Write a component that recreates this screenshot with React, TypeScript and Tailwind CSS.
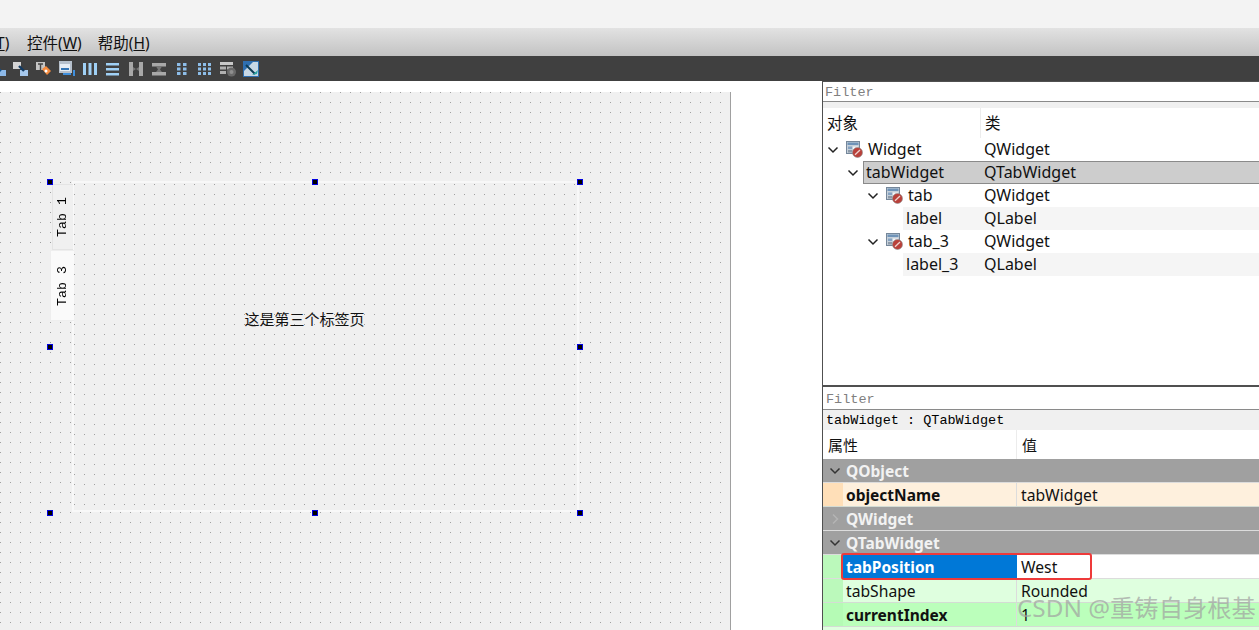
import React from 'react';

const MONO = 'font-["Liberation_Mono","Noto_Sans_CJK_SC",monospace]';

const Chevron = ({ open = true, light = false }: { open?: boolean; light?: boolean }) => (
  <svg width="12" height="12" viewBox="0 0 12 12" fill="none" className="shrink-0"
       stroke={light ? (open ? '#333' : '#b4b4b4') : '#222'} strokeWidth="1.5">
    {open ? <path d="M1.5 3.5 6 8l4.5-4.5" /> : <path d="M4 1.5 8.5 6 4 10.5" />}
  </svg>
);

const WidgetIcon = () => (
  <svg width="17" height="17" viewBox="0 0 17 17" className="shrink-0 blur-[0.3px]">
    <rect x="0.5" y="0.5" width="13" height="12" fill="#c6d0da" stroke="#75879a" />
    <rect x="1.5" y="1.5" width="11" height="2.5" fill="#6f93b8" />
    <rect x="2" y="5.5" width="4" height="2.5" fill="#86a3c2" />
    <rect x="7" y="5.5" width="5" height="2.5" fill="#f2f5f8" />
    <rect x="2" y="9" width="4" height="2.5" fill="#8d9aa8" />
    <circle cx="11.5" cy="11.5" r="5" fill="#b9403a" stroke="#8e8e8e" strokeWidth="0.6" />
    <path d="M9 13.8 14 9" stroke="#efd3cf" strokeWidth="1.3" />
  </svg>
);

const toolIcons: React.ReactNode[] = [
  <g key="a"><rect x="0" y="1" width="8" height="7" fill="#c9c9c9" /><rect x="8" y="9" width="8" height="6" fill="#8db9e8" /><path d="M7 6l4 4" stroke="#0f4f8a" strokeWidth="2" /></g>,
  <g key="b"><rect x="0" y="1" width="8" height="7" fill="#d4d4d4" /><rect x="7" y="9" width="8" height="6" fill="#a6c8ec" /><path d="M6 5l5 5" stroke="#123a63" strokeWidth="2.4" /></g>,
  <g key="c"><rect x="0" y="1" width="9" height="8" fill="#c4c4c4" /><path d="M2 3h5M4.500 3v6" stroke="#444" strokeWidth="1.400" /><path d="M6 8l4-3 5 5-4 4z" fill="#f58a3c" /><circle cx="10" cy="10" r="1.500" fill="#fff" /></g>,
  <g key="d"><rect x="0" y="0" width="13" height="12" fill="#b6c0cc" /><rect x="1" y="3" width="10" height="7" fill="#e6edf5" /><path d="M2 8h8" stroke="#3475b5" strokeWidth="2" /><path d="M4 13h8M15 9v6" stroke="#3f8fdc" strokeWidth="2" /></g>,
  <g key="e" fill="#9fd0f5"><rect x="1" y="2" width="3" height="12" /><rect x="6.500" y="2" width="3" height="12" /><rect x="12" y="2" width="3" height="12" /></g>,
  <g key="f" fill="#9fd0f5"><rect x="1" y="2" width="13" height="2.500" /><rect x="1" y="7" width="13" height="2.500" /><rect x="1" y="12" width="13" height="2.500" /></g>,
  <g key="g" fill="#a8a8a8"><rect x="1" y="1" width="4" height="14" /><rect x="11" y="1" width="4" height="14" /><path d="M5 6l3 2 3-2v4l-3-2-3 2z" fill="#777" /></g>,
  <g key="h" fill="#a8a8a8"><rect x="1" y="2" width="14" height="3.500" /><rect x="1" y="11" width="14" height="3.500" /><path d="M5 5.500h6l-2 3 2 2.500H5l2-2.500z" fill="#777" /></g>,
  <g key="i" fill="#8dbde8"><rect x="3" y="2" width="3.500" height="3" /><rect x="9" y="2" width="3.500" height="3" /><rect x="3" y="6.500" width="3.500" height="3" /><rect x="9" y="6.500" width="3.500" height="3" /><rect x="3" y="11" width="3.500" height="3" /><rect x="9" y="11" width="3.500" height="3" /></g>,
  <g key="j" fill="#8dbde8"><rect x="1" y="2" width="3" height="3" /><rect x="6" y="2" width="3" height="3" /><rect x="11" y="2" width="3" height="3" /><rect x="1" y="6.500" width="3" height="3" /><rect x="6" y="6.500" width="3" height="3" /><rect x="11" y="6.500" width="3" height="3" /><rect x="1" y="11" width="3" height="3" /><rect x="6" y="11" width="3" height="3" /><rect x="11" y="11" width="3" height="3" /></g>,
  <g key="k"><rect x="0" y="1" width="13" height="3" fill="#c8c8c8" /><rect x="0" y="5.500" width="6" height="3" fill="#b0b0b0" /><rect x="7" y="5.500" width="6" height="3" fill="#b0b0b0" /><rect x="0" y="10" width="6" height="3" fill="#b0b0b0" /><circle cx="11.500" cy="11" r="4.500" fill="#6a6a6a" /><circle cx="11.500" cy="11" r="2" fill="#8f8f8f" /></g>,
  <g key="l"><rect x="0.500" y="0.500" width="15" height="15" fill="#c8d8e6" stroke="#2f6fb0" /><path d="M1 1h9L1 10z" fill="#2f6fb0" /><path d="M3 4l9 9" stroke="#0c3d55" strokeWidth="2" /><path d="M9 14l5-1 1-4z" fill="#2aa3a3" /></g>,
];

const Handle = ({ pos }: { pos: string }) => (
  <div className={`absolute size-[6px] bg-black border border-[#0000e0] ${pos}`} />
);

const TreeRow = ({ indent, name, type, icon, chevron, alt }: {
  indent: string; name: string; type: string; icon?: boolean; chevron?: boolean; alt?: boolean;
}) => (
  <div className="flex h-[23px] items-center">
    <div className={`flex h-full w-[157px] shrink-0 items-center ${indent}`}>
      {chevron && <Chevron />}
      {icon && <span className="ml-[7px] mr-[5px]"><WidgetIcon /></span>}
      {!chevron && <span className={`flex h-full flex-1 items-center pb-[2px] pl-[3px] ${alt ? 'bg-[#f5f5f5]' : ''}`}>{name}</span>}
      {chevron && <span className="pb-[2px]">{name}</span>}
    </div>
    <div className={`flex h-full flex-1 items-center pb-[2px] pl-[4px] ${alt ? 'bg-[#f5f5f5]' : ''}`}>{type}</div>
  </div>
);

const GroupRow = ({ name, open = true }: { name: string; open?: boolean }) => (
  <div className="flex h-[24px] items-center border-b border-[#dcdcdc] bg-[#a0a0a0] pl-[6px] text-[15.500px] font-bold text-[#f2f2f2]">
    <Chevron open={open} light />
    <span className="ml-[5px] pt-[3px]">{name}</span>
  </div>
);

const PropRow = ({ name, value, bold, rowBg, sideBg }: {
  name: string; value: string; bold?: boolean; rowBg: string; sideBg: string;
}) => (
  <div className={`flex h-[24px] border-b border-[#d4dcd4] text-[15.700px] ${rowBg}`}>
    <div className={`w-[20px] shrink-0 ${sideBg}`} />
    <div className={`flex w-[174px] shrink-0 items-center border-r border-[#dcdcdc] pl-[3px] pt-[3px] ${bold ? 'text-[15.500px] font-bold' : ''}`}>{name}</div>
    <div className="flex flex-1 items-center pl-[4px] pt-[3px]">{value}</div>
  </div>
);

export default function App() {
  return (
    <div className='relative flex h-[630px] w-[1259px] flex-col overflow-hidden bg-white font-["Noto_Sans","Noto_Sans_CJK_SC",sans-serif] text-[16px] text-[#111]'>
      <div className="h-[28px] shrink-0 bg-[#f3f3f3]" />

      <div className="flex h-[28px] shrink-0 items-center gap-[16px] bg-gradient-to-b from-[#e2e2e2] to-[#c3c3c3] pl-[27px] pt-[3px] text-[15.500px]">
        <span className="absolute left-[-4px]"><u>T</u>)</span>
        <span>控件(<u>W</u>)</span>
        <span>帮助(<u>H</u>)</span>
      </div>

      <div className="-ml-[10px] flex h-[25px] shrink-0 items-center gap-[7px] bg-[#404040]">
        {toolIcons.map((g, i) => (
          <svg key={i} width="16" height="16" viewBox="0 0 16 16" className="shrink-0 blur-[0.4px]">{g}</svg>
        ))}
      </div>

      <div className="flex min-h-0 flex-1">
        <div className="w-[822px] shrink-0 pt-[11px]">
          <div className="relative h-full w-[731px] border-r border-[#a0a0a0] bg-[#f0f0f0] bg-[conic-gradient(at_1px_1px,transparent_270deg,#a0a0a0_270deg)] bg-[size:10px_10px]">
            <div className="absolute left-[72px] top-[89px] h-[331px] w-[507px] border-2 border-[#f8f8f8] bg-[#f0f0f0] bg-[conic-gradient(at_1px_1px,transparent_270deg,#a0a0a0_270deg)] bg-[size:10px_10px] bg-[position:0_1px] bg-clip-padding">
              <div className="flex h-full items-center justify-center pb-[54px] pr-[42px] text-[15px]">这是第三个标签页</div>
            </div>
            <div className={`absolute left-[52px] top-[92px] flex h-[66px] w-[21px] items-center justify-center border border-r-0 border-[#e4e4e4] bg-[#f0f0f0] text-[13.300px] text-black ${MONO}`}>
              <span className="rotate-180 [writing-mode:vertical-rl]">Tab 1</span>
            </div>
            <div className={`absolute left-[50px] top-[158px] flex h-[71px] w-[24px] items-center justify-center border border-r-0 border-[#eeeeee] bg-[#fafafa] text-[13.300px] text-black ${MONO}`}>
              <span className="rotate-180 [writing-mode:vertical-rl]">Tab 3</span>
            </div>
            <Handle pos="left-[47px] top-[87px]" />
            <Handle pos="left-[312px] top-[87px]" />
            <Handle pos="left-[577px] top-[87px]" />
            <Handle pos="left-[47px] top-[252px]" />
            <Handle pos="left-[577px] top-[252px]" />
            <Handle pos="left-[47px] top-[418px]" />
            <Handle pos="left-[312px] top-[418px]" />
            <Handle pos="left-[577px] top-[418px]" />
          </div>
        </div>

        <div className="flex min-w-0 flex-1 flex-col border-l border-[#505050]">
          <div className="flex h-[304px] shrink-0 flex-col">
            <div className={`flex h-[21px] shrink-0 items-center border-b border-t border-b-[#8a8a8a] border-t-[#505050] pl-[2px] pt-[4px] text-[13.500px] text-[#808080] ${MONO}`}>Filter</div>
            <div className="h-[6px] shrink-0 bg-[#f0f0f0]" />
            <div className="flex h-[30px] shrink-0 items-center text-[15.500px]">
              <div className="flex h-full w-[158px] items-center border-r border-[#ececec] pl-[4px]"><span className="pt-[1px]">对象</span></div>
              <div className="pl-[4px] pt-[1px]">类</div>
            </div>
            <TreeRow indent="pl-[4px]" name="Widget" type="QWidget" icon chevron />
            <div className="flex h-[23px] items-center pl-[24px]">
              <Chevron />
              <div className="-mr-[2px] ml-[4px] flex h-full flex-1 items-center border border-[#8a8a8a] bg-[#cdcdcd] pb-[2px] pl-[2px]">
                <span className="w-[118px]">tabWidget</span>
                <span>QTabWidget</span>
              </div>
            </div>
            <TreeRow indent="pl-[44px]" name="tab" type="QWidget" icon chevron />
            <TreeRow indent="pl-[80px]" name="label" type="QLabel" alt />
            <TreeRow indent="pl-[44px]" name="tab_3" type="QWidget" icon chevron />
            <TreeRow indent="pl-[80px]" name="label_3" type="QLabel" alt />
          </div>

          <div className="flex min-h-0 flex-1 flex-col border-t-2 border-[#505050]">
            <div className={`flex h-[23px] shrink-0 items-center border-b border-[#8a8a8a] pl-[3px] pt-[5px] text-[13.500px] text-[#808080] ${MONO}`}>Filter</div>
            <div className={`flex h-[20px] shrink-0 items-center bg-[#f0f0f0] pl-[3px] pt-[3px] text-[13.500px] text-black ${MONO}`}>tabWidget : QTabWidget</div>
            <div className="flex h-[29px] shrink-0 items-center text-[15px]">
              <div className="flex h-full w-[194px] items-center border-r border-[#ececec] pl-[5px]"><span className="pt-[2px]">属性</span></div>
              <div className="pl-[5px] pt-[2px]">值</div>
            </div>
            <GroupRow name="QObject" />
            <PropRow name="objectName" value="tabWidget" bold rowBg="bg-[#fef0dd]" sideBg="bg-[#ffdfb8]" />
            <GroupRow name="QWidget" open={false} />
            <GroupRow name="QTabWidget" />
            <div className="flex h-[24px] border-b border-[#dcdcdc] bg-white text-[15.700px]">
              <div className="w-[20px] shrink-0 bg-[#bbf9bb]" />
              <div className="flex w-[174px] shrink-0 items-center bg-[#0078d7] pl-[3px] pt-[3px] text-[15.500px] font-bold text-white">tabPosition</div>
              <div className="flex flex-1 items-center pl-[4px] pt-[3px]">West</div>
            </div>
            <PropRow name="tabShape" value="Rounded" rowBg="bg-[#dfffdf]" sideBg="bg-[#bbf9bb]" />
            <PropRow name="currentIndex" value="1" bold rowBg="bg-[#bbffbb]" sideBg="bg-[#b5fbb5]" />
            <div className="flex-1 bg-[#dfffdf]" />
          </div>
        </div>
      </div>

      <div className="absolute left-[841px] top-[553px] h-[27px] w-[251px] rounded-[3px] border-2 border-[#ee3a3a]" />
      <div className="absolute left-[1017px] top-[593px] text-[24.300px] leading-[30px] text-[#a0a0a0]/70">CSDN @重铸自身根基</div>
    </div>
  );
}
